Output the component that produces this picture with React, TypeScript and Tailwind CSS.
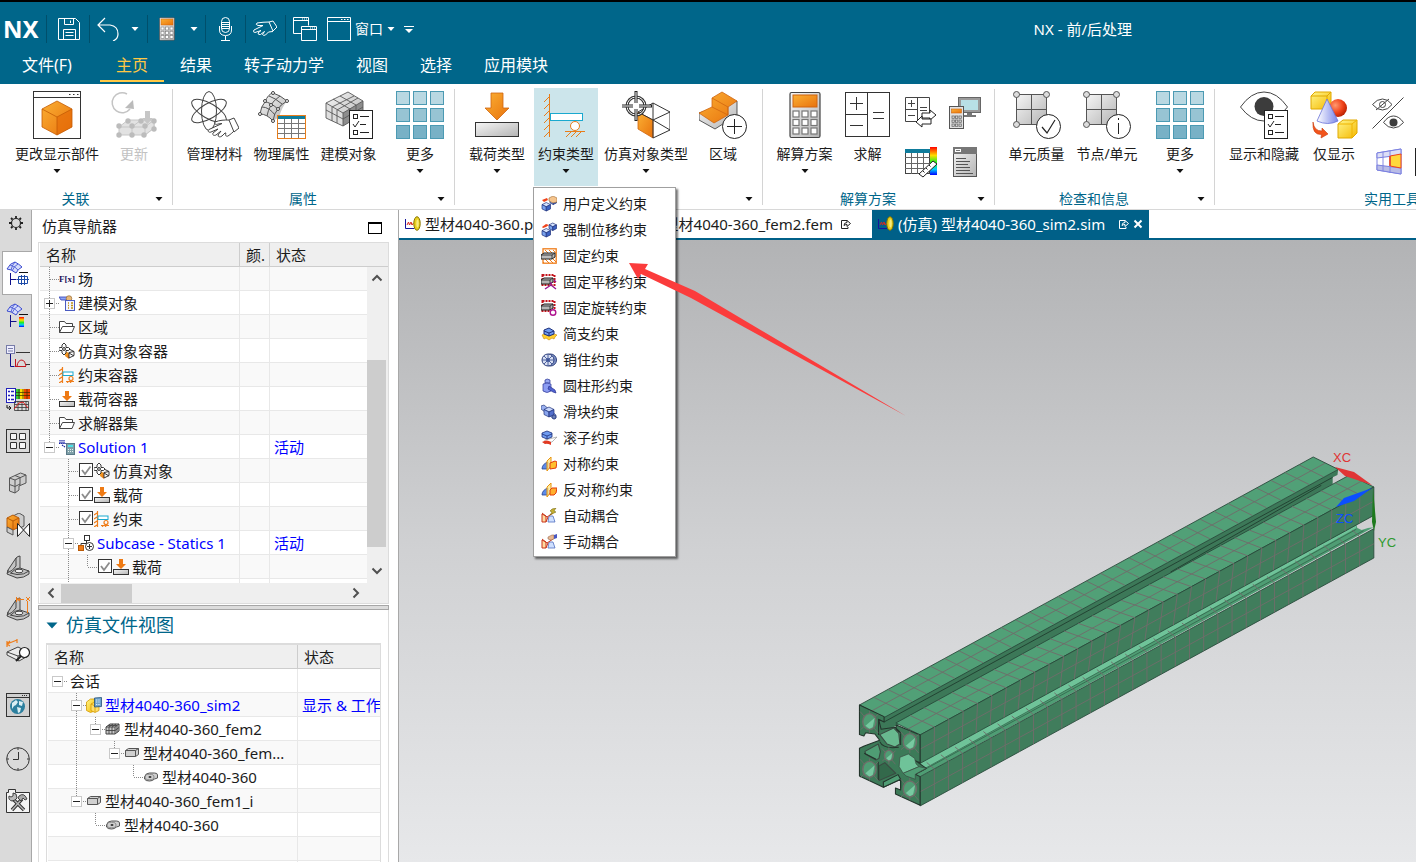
import React from "react";

type Kids = { children?: React.ReactNode };

/* ---------- drawing helpers ---------- */

function Svg({ s = 48, w, h, vb, children }: Kids & { s?: number; w?: number; h?: number; vb?: string }) {
  return (
    <svg width={w ?? s} height={h ?? s} viewBox={vb ?? `0 0 ${w ?? s} ${h ?? s}`} fill="none" className="block shrink-0" aria-hidden="true">
      {children}
    </svg>
  );
}

function Cube({ x, y, w, c = ["#d5e4ff", "#7aa3ee", "#3c63c4"], st = "#1d2f7a" }: { x: number; y: number; w: number; c?: string[]; st?: string }) {
  const q = w / 4;
  return (
    <g stroke={st} strokeWidth={w > 12 ? 1 : 0.7} strokeLinejoin="round">
      <path fill={c[0]} d={`M${x} ${y + q}L${x + 2 * q} ${y}L${x + w} ${y + q}L${x + 2 * q} ${y + 2 * q}Z`} />
      <path fill={c[1]} d={`M${x} ${y + q}L${x + 2 * q} ${y + 2 * q}V${y + w}L${x} ${y + 3 * q}Z`} />
      <path fill={c[2]} d={`M${x + w} ${y + q}L${x + 2 * q} ${y + 2 * q}V${y + w}L${x + w} ${y + 3 * q}Z`} />
    </g>
  );
}

function Defs() {
  return (
    <svg width="0" height="0" className="absolute" aria-hidden="true">
      <defs>
        <linearGradient id="gOrange" x1="0" y1="0" x2="1" y2="1">
          <stop offset="0" stopColor="#fbb034" />
          <stop offset="1" stopColor="#e8720c" />
        </linearGradient>
        <linearGradient id="gGrey" x1="0" y1="0" x2="1" y2="1">
          <stop offset="0" stopColor="#f6f6f6" />
          <stop offset="1" stopColor="#b4b4b4" />
        </linearGradient>
        <linearGradient id="gRain" x1="0" y1="0" x2="0" y2="1">
          <stop offset="0" stopColor="#f00" />
          <stop offset=".3" stopColor="#fd0" />
          <stop offset=".55" stopColor="#2e2" />
          <stop offset=".8" stopColor="#0cf" />
          <stop offset="1" stopColor="#00f" />
        </linearGradient>
        <linearGradient id="gYellow" x1="0" y1="0" x2="1" y2="1">
          <stop offset="0" stopColor="#fff68a" />
          <stop offset="1" stopColor="#f5b800" />
        </linearGradient>
        <linearGradient id="gBlue" x1="0" y1="0" x2="1" y2="0">
          <stop offset="0" stopColor="#fff" />
          <stop offset="1" stopColor="#7a86e8" />
        </linearGradient>
        <radialGradient id="gRed" cx=".35" cy=".35" r=".7">
          <stop offset="0" stopColor="#ff9a70" />
          <stop offset=".6" stopColor="#f0431a" />
          <stop offset="1" stopColor="#b82000" />
        </radialGradient>
      </defs>
    </svg>
  );
}

function Caret({ light = false }: { light?: boolean }) {
  return (
    <Svg w={8} h={4} vb="0 0 8 4">
      <path d="M.5 0h7L4 4z" fill={light ? "#fff" : "#111"} />
    </Svg>
  );
}

/* ---------- ribbon icons ---------- */

const IcChangePart = () => (
  <Svg>
    <rect x=".5" y=".5" width="47" height="47" stroke="#333" />
    <path d="M0 6.500h48" stroke="#333" />
    <path d="M36 3.500h1.500M40 3.500h1.500M44 3.500h1.500" stroke="#333" strokeWidth="1.200" />
    <path d="M24 10l15 8v18l-15 8-15-8V18z" fill="url(#gOrange)" />
    <path d="M24 26l15-8v18l-15 8z" fill="#e56c08" fillOpacity=".7" />
    <path d="M24 26v18M9 18l15 8 15-8M24 10l15 8v18l-15 8-15-8V18z" stroke="#c45c05" strokeWidth=".8" />
  </Svg>
);

const IcUpdate = () => (
  <Svg>
    <path d="M17 3A10 10 0 1 0 20 18" stroke="#c4c4c4" strokeWidth="1.500" />
    <path d="M15 17l8-8 1 9z" fill="#bbb" />
    <path d="M9 36l10-7h26v8l-9 7H9z" fill="#e2e2e2" />
    <path d="M9 36h26l9-7H18zM9 36v8h26v-8M22 36v8M35 44l9-7v-8M31 29l-9 7" stroke="#c6c6c6" />
    <path d="M35 20h5v7h3l-5.500 6-5.500-6h3z" fill="#c6c6c6" />
    <g fill="#bcbcbc">
      {[[9, 35], [22, 35], [35, 35], [9, 44], [22, 44], [34, 44], [18, 30], [31, 30], [44, 30], [44, 38]].map(([x, y], i) => (
        <circle key={i} cx={x} cy={y} r="2.700" />
      ))}
    </g>
  </Svg>
);

const IcAtom = () => (
  <Svg>
    <g stroke="#444" strokeWidth="1">
      <ellipse cx="18" cy="20" rx="7.500" ry="19.500" />
      <ellipse cx="18" cy="20" rx="7.500" ry="19.500" transform="rotate(60 18 20)" />
      <ellipse cx="18" cy="20" rx="7.500" ry="19.500" transform="rotate(-60 18 20)" />
      <path
        d="M38 29l5-2 5 10-5 4zM38 29c-5 0-9 0-14 2-1 2 1 3 3 2l4-.5-13 6c-2 1.500 0 3.500 2 2.500l7-3-5 4c-1 2 1 3 3 2l5-4-3 4c0 2 2 2.500 4 1l3-3 1 0c-1 2 0 4 2 3 3-2 5-4 6-5"
        fill="#fff"
        strokeLinejoin="round"
      />
    </g>
  </Svg>
);

const IcPhys = () => (
  <Svg>
    <path d="M7 11Q10 3 15 2Q22 4 29 10Q24 16 21 26L15 30Q10 23 2 23Q3 15 7 11Z" fill="url(#gGrey)" />
    <path d="M7 11Q10 3 15 2Q22 4 29 10Q22 14 20 18Q16 22 15 30Q9 23 2 23Q3 15 7 11ZM7 11Q12 11 20 18M4 16Q11 16 17 24M11 5Q17 7 24 13M22 5Q15 10 13 14Q10 19 9 25" stroke="#555" />
    <g fill="#fff" stroke="#444">
      {[[15, 2], [7, 10], [29, 10], [20, 18], [13, 14], [2, 23], [15, 30]].map(([x, y], i) => (
        <circle key={i} cx={x} cy={y} r="1.500" />
      ))}
    </g>
    <rect x="19.500" y="24.500" width="28" height="23" fill="#fff" />
    <rect x="20" y="25" width="27" height="3" fill="#0f7c9c" />
    <path d="M26.500 28v19M33.500 28v19M40.500 28v19M20 32.500h27M20 37.500h27M20 42.500h27" stroke="#777" />
    <rect x="19.500" y="24.500" width="28" height="23" stroke="#e87d1a" />
  </Svg>
);

const Checklist = ({ x, y }: { x: number; y: number }) => (
  <g transform={`translate(${x} ${y})`} stroke="#222">
    <rect x=".5" y=".5" width="23" height="28" fill="#fff" />
    <rect x="4.500" y="4.500" width="4" height="4" />
    <rect x="4.500" y="20.500" width="4" height="4" />
    <path d="M11 6.500h9M11 14.500h6M11 22.500h9M4 14l2 3 4-6" />
  </g>
);

const IcModel = () => (
  <Svg>
    <path d="M1 12L23 1l15 9v13L18 35 1 27z" fill="url(#gGrey)" />
    <path d="M1 12l17 10v13L1 27z" fill="#dedede" />
    <path d="M18 22l20-12v13L18 35z" fill="#8d8d8d" />
    <path d="M1 12L23 1l15 9L18 22zM1 12v15l17 8 20-12V10M18 22v13M1 19l17 9 20-12M8 8l17 10v13M15 5l16 9v13M7 16L29 5M12 19L33 7M7 16v14M12 19v13" stroke="#5a5a5a" strokeWidth=".9" />
    <Checklist x={24} y={19} />
  </Svg>
);

const IcMore = () => (
  <Svg>
    {[0, 1, 2].map((r) =>
      [0, 1, 2].map((c) => (
        <rect key={`${r}${c}`} x={c * 17 + 0.5} y={r * 17 + 0.5} width="13" height="13" fill={["#b9d8e2", "#97c4d3", "#78b1c6"][r]} stroke="#4c9ab3" />
      ))
    )}
  </Svg>
);

const IcLoad = () => (
  <Svg>
    <path d="M18 2h12v15h6L24 29 12 17h6z" fill="url(#gOrange)" stroke="#cf6510" strokeWidth=".8" />
    <rect x="2.500" y="31.500" width="43" height="14" fill="url(#gGrey)" stroke="#333" />
  </Svg>
);

const IcConstraint = () => (
  <Svg>
    <g stroke="#e87d1a">
      <path d="M7.500 3v43M7 6l-5 5M7 13l-5 5M7 20l-5 5M7 27l-5 5M7 34l-5 5M7 41l-5 5" />
      <circle cx="33" cy="35" r="4.500" fill="#fff" />
      <path d="M23 40.500h20M29 41l-5 5M34 41l-5 5M39 41l-5 5" />
    </g>
    <rect x="8.500" y="22.500" width="32" height="7" fill="#fff" stroke="#1aa9cf" />
  </Svg>
);

const IcSimObj = () => (
  <Svg>
    <path d="M16 21l15 8v18l-15-9z" fill="url(#gOrange)" stroke="#cf6510" strokeWidth=".8" />
    <path d="M16 21l15-9 17 9v18l-17 8M31 12v35M31 29l17-8M31 29l17 10M31 29L16 21" stroke="#333" />
    <circle cx="14" cy="15" r="9" stroke="#333" strokeWidth="3" />
    <circle cx="14" cy="15" r="9" stroke="#fff" strokeWidth="1" />
    <path d="M14 0v12M14 18v12M-1 15h12M17 15h13" stroke="#222" strokeWidth="3" />
    <path d="M14 1v11M14 18v11M0 15h11M17 15h12" stroke="#fff" strokeWidth="1" />
  </Svg>
);

const IcRegion = () => (
  <Svg>
    <path d="M0 22v7l16 9 22-14V10z" fill="url(#gGrey)" stroke="#333" strokeWidth=".8" />
    <path d="M13 7l10-6 15 9-9 6v8L15 32 0 22l13-6z" fill="url(#gOrange)" stroke="#cf6510" strokeWidth=".8" />
    <path d="M13 7l16 9v8l-16-8" stroke="#cf6510" strokeWidth=".8" />
    <circle cx="35.500" cy="35.500" r="12" fill="#fff" stroke="#222" />
    <path d="M35.500 28v15M28 35.500h15" stroke="#222" />
  </Svg>
);

const CalcShape = ({ w, h }: { w: number; h: number }) => (
  <Svg w={w} h={h} vb="0 0 32 48">
    <rect x="1" y="1.500" width="30" height="45" rx="1.500" fill="url(#gGrey)" stroke="#444" strokeWidth="1.200" />
    <rect x="4" y="4" width="24" height="12" fill="url(#gOrange)" stroke="#d0640e" />
    {[20, 28.500, 37].map((y) => [4, 13, 22].map((x) => <rect key={`${x}-${y}`} x={x} y={y} width="6" height="6" fill="#fff" stroke="#777" strokeWidth="1.200" />))}
  </Svg>
);

const IcSolve = () => (
  <Svg>
    <g stroke="#333">
      <rect x="1.500" y="1.500" width="44" height="44" fill="#fff" />
      <path d="M23.500 1.500v44M1.500 23.500h22M6 12.500h13M12.500 6v13M6 34.500h13M29 21.500h11M29 27.500h11" />
    </g>
  </Svg>
);

const IcCalcArrows = () => (
  <Svg s={32}>
    <path d="M.5.5h24v24H.500zM12.500.5v24M.5 12.500h12M3 6.500h7M6.500 3v7M3 18.500h7M15 10.500h7M15 13.500h7" fill="#fff" stroke="#444" />
    <path d="M17 16h8v-3l6 5-6 5v-2h-8z" fill="#fff" stroke="#222" />
    <path d="M26 22h-9v-3l-6 6 6 5v-3h9z" fill="#fff" stroke="#222" />
  </Svg>
);

const IcMonitor = () => (
  <Svg s={32}>
    <rect x="9.500" y=".5" width="22" height="15" fill="#9a9a9a" stroke="#666" />
    <path d="M12 3h17v10H12z" fill="#b8e0e6" />
    <path d="M18 16h5v2h4v2H15v-2h3z" fill="#777" />
    <rect x=".5" y="9.500" width="14" height="22" fill="#e2e2e2" stroke="#555" />
    <rect x="2.500" y="12" width="10" height="4" fill="url(#gOrange)" stroke="#d0640e" strokeWidth=".6" />
    {[19, 23, 27].map((y) => [3, 6.500, 10].map((x) => <rect key={`${x}-${y}`} x={x} y={y} width="2.300" height="2.300" stroke="#666" strokeWidth=".8" />))}
  </Svg>
);

const IcTableRuler = () => (
  <Svg s={32}>
    <rect x=".5" y="3.500" width="24" height="24" fill="#fff" stroke="#444" />
    <rect x="0" y="3" width="25" height="4" fill="#0f7c9c" />
    <path d="M6.500 7v21M12.500 7v21M18.500 7v21M0 11.500h25M0 17.500h25M0 22.500h25" stroke="#666" />
    <rect x="25" y="1" width="7" height="28" fill="url(#gRain)" />
    <path d="M14 28l14-13 4 3-14 13z" fill="#fff" stroke="#222" />
    <path d="M18 25l1.500 1.500M21 22l1.500 1.500M24 19l1.500 1.500" stroke="#222" />
  </Svg>
);

const IcDoc = () => (
  <Svg s={32}>
    <rect x="4.500" y="1.500" width="23" height="29" fill="url(#gGrey)" stroke="#555" />
    <rect x="4" y="1" width="24" height="7" fill="#777" />
    <rect x="6.500" y="3.500" width="5" height="2" stroke="#fff" />
    <path d="M7 12.500h10M7 15.500h14M7 18.500h12M7 21.500h14M7 24.500h14M7 27.500h17" stroke="#555" />
  </Svg>
);

const MeshSquare = () => (
  <>
    <rect x="3.500" y="3.500" width="30" height="30" fill="url(#gGrey)" />
    <path d="M3.500 3.500h30v30h-30zM18.500 3.500v30M3.500 18.500h30" stroke="#555" />
    <g fill="#ddd" stroke="#555">
      <circle cx="3.500" cy="3.500" r="3" />
      <circle cx="33.500" cy="3.500" r="3" />
      <circle cx="3.500" cy="33.500" r="3" />
    </g>
    <circle cx="35.500" cy="35.500" r="12" fill="#fff" stroke="#222" />
  </>
);

const IcQuality = () => (
  <Svg>
    <MeshSquare />
    <path d="M29 36l5 6 8-13" stroke="#222" strokeWidth="1.200" />
  </Svg>
);

const IcNode = () => (
  <Svg>
    <MeshSquare />
    <path d="M35.500 32v11M35.500 27v2" stroke="#222" />
  </Svg>
);

const IcEye = () => (
  <Svg>
    <path d="M.5 16Q11 1 24 1T47.500 16Q37 30 24 30T.5 16z" fill="#fff" stroke="#444" />
    <circle cx="24" cy="15.500" r="9.500" fill="#3c3c3c" />
    <Checklist x={24} y={19} />
  </Svg>
);

const IcOnly = () => (
  <Svg>
    <path d="M1 5l4-4h16v12l-4 5H1z" fill="url(#gYellow)" stroke="#e0a800" />
    <path d="M1 5h16v12M17 5l4-4" stroke="#e0a800" />
    <circle cx="28" cy="17" r="9" fill="url(#gRed)" />
    <path d="M17 8l11 22q-10 5-21 0z" fill="url(#gBlue)" stroke="#6a74d8" strokeWidth=".8" />
    <path d="M3 31q1 9 9 9l0-3 6 6-7 4 .5-3.500Q2 44 3 31z" fill="#f2541b" stroke="#c93a0c" strokeWidth=".6" />
    <path d="M28 33l5-4h14v13l-5 5H28z" fill="url(#gYellow)" stroke="#e0a800" />
    <path d="M28 33h14v14M42 33l5-4" stroke="#f0b400" />
  </Svg>
);

const IcEyes = () => (
  <Svg s={32}>
    <g stroke="#444">
      <path d="M31.500.5L.5 31.500" />
      <path d="M.5 7.500Q5 2 10.500 2T20 7.500Q16 13 10.500 13T.5 7.500z" />
      <circle cx="10.500" cy="7.500" r="3" />
      <path d="M4 13L17 2" />
      <path d="M11.500 25.500Q16 19 21.500 19T31.500 25.500Q27 31 21.500 31T11.500 25.500z" />
    </g>
    <circle cx="21.500" cy="25.500" r="4" fill="#3c3c3c" />
  </Svg>
);

const IcPlanes = () => (
  <Svg s={32}>
    <path d="M5 7l24-4v25L5 24z" fill="#fff" stroke="#7a80e0" />
    <path d="M5 19l24 3v6L5 24z" fill="#b9bce6" stroke="#7a80e0" />
    <path d="M5 7l24-4v6L5 12z" fill="#dcdef6" stroke="#7a80e0" />
    <path d="M18 10l11-2v14l-11-2z" fill="#ffd83b" stroke="#f0431a" />
    <path d="M18 5v22M11 6v19" stroke="#7a80e0" strokeWidth=".9" />
    <path d="M18 10v10" stroke="#f0431a" strokeWidth="1.500" />
  </Svg>
);

const IcEdge = () => (
  <Svg s={32}>
    <path d="M.5 2v28M0 4.500h20" stroke="#222" />
  </Svg>
);

/* ---------- small 16px icons ---------- */

const S16 = ({ children }: Kids) => <Svg s={16}>{children}</Svg>;

const menuIcons: React.ReactNode[] = [
  <S16 key="0"><Cube x={9} y={2} w={6.500} /><Cube x={1} y={6.500} w={8.500} /><path d="M8 2l4-2 4 2v4l-4 1-4-2z" fill="#f5c48c" stroke="#9a6a35" strokeWidth=".6" /><path d="M1 4l5-2 1 2-4 2z" fill="#f0431a" /></S16>,
  <S16 key="1"><Cube x={8} y={1} w={7.500} /><Cube x={1} y={6.500} w={8.500} /><path d="M1 5l4-3 3 1-3 2-3 1z" fill="#f0431a" /></S16>,
  <S16 key="2"><rect x="2" y=".8" width="13.200" height="14.400" fill="#fff" stroke="#ef7d1a" strokeWidth="1.300" /><path d="M4 2l3 3M8 2l3 3M12 2l3 3M3 15l-1-1M4 11l4 4M8 11l4 4M12 11l3 3" stroke="#ef7d1a" /><path d="M0 7l3-2h11v4l-3 2H0z" fill="#bbb" stroke="#222" /><path d="M0 7h11v4M11 7l3-2" stroke="#222" strokeWidth=".8" /></S16>,
  <S16 key="3"><path d="M1.500 1h12v10h-12z" fill="#fff" stroke="#c4141c" strokeDasharray="2 1" strokeWidth="2" /><path d="M0 6l3-2h9v4L9 10H0z" fill="#b5b5b5" stroke="#222" /><path d="M0 6h9v4M9 6l3-2" stroke="#222" strokeWidth=".8" /><path d="M4 15l6-4 5 4M10 8v4M13 6l2 2" stroke="#9a1590" strokeWidth="1.400" /></S16>,
  <S16 key="4"><path d="M1.500 1h12v10h-12z" fill="#fff" stroke="#c4141c" strokeDasharray="2 1" strokeWidth="2" /><path d="M0 6l3-2h9v4L9 10H0z" fill="#b5b5b5" stroke="#222" /><path d="M0 6h9v4M9 6l3-2" stroke="#222" strokeWidth=".8" /><circle cx="12" cy="12.500" r="2.800" fill="#fff" stroke="#b01590" strokeWidth="1.400" /></S16>,
  <S16 key="5"><path d="M1 9l2-1 5 2 5-2 3 1-2 2-1 2-2-1-3 2-3-2-2 1-1-2z" fill="#ffcf2e" stroke="#c98a00" strokeWidth=".6" /><path d="M3 4l5-2 5 3v3l-5 2-5-2z" fill="#6f9cf0" stroke="#1d2f7a" /><path d="M3 5l5 2 5-2M8 7v3" stroke="#1d2f7a" /></S16>,
  <S16 key="6"><circle cx="9.500" cy="8" r="6" fill="#7f93c8" stroke="#2d3f7c" /><circle cx="7" cy="8" r="6" fill="#d8dff2" stroke="#2d3f7c" /><circle cx="7" cy="8" r="2" fill="#4a62a8" /><path d="M7 2v12M1 8h12M3 4l8 8M11 4l-8 8" stroke="#3f5596" strokeWidth=".9" /></S16>,
  <S16 key="7"><path d="M4 2q2-2 5 0v3h-5z" fill="#98a8f0" stroke="#2a3494" strokeWidth=".7" /><path d="M2 6q4-2 8 0v7q-4 3-8 0z" fill="#8c9cf2" stroke="#2a3494" strokeWidth=".7" /><path d="M8 8l6 4 1 3-3-1-5-3z" fill="#4f62d0" stroke="#2a3494" strokeWidth=".7" /></S16>,
  <S16 key="8"><path d="M0 2l3-1 12 10v3l-2 1L0 5z" fill="#9ab0f0" stroke="#2d3f7c" strokeWidth=".7" /><Cube x={3} y={3} w={10} c={["#c7d6fb", "#8aa6ee", "#5470cc"]} /><circle cx="13" cy="13" r="2" fill="#6b7fb5" stroke="#1d2f7a" strokeWidth=".7" /></S16>,
  <S16 key="9"><path d="M4 10l12-3-5 5-8 1z" fill="#fff" stroke="#999" strokeWidth=".7" /><path d="M1 3l5-2 5 2v4l-5 2-5-2z" fill="#6f9cf0" stroke="#1d2f7a" strokeWidth=".8" /><path d="M1 4l5 2 5-2M6 6v3" stroke="#1d2f7a" strokeWidth=".8" /><path d="M1 12q5-3 9 0v3q-4-2-6-1z" fill="#e23a22" /></S16>,
  <S16 key="10"><path d="M1 13q0-5 6-7v7z" fill="#5c8bea" stroke="#24418f" strokeWidth=".8" /><path d="M6 5l4-4v9l-4 5z" fill="#ffe68a" fillOpacity=".8" stroke="#e8940c" /><path d="M9 7l5-2 2 1-1 6-6 1z" fill="#ffc02e" stroke="#e23a0c" /></S16>,
  <S16 key="11"><path d="M1 13q0-5 6-7v7z" fill="#5c8bea" stroke="#24418f" strokeWidth=".8" /><path d="M6 5l4-4v9l-4 5z" fill="#ffe68a" fillOpacity=".8" stroke="#e8940c" /><path d="M9 8l2-2 5 0-1 5-2 2H9z" fill="#ffb02e" stroke="#e23a0c" /></S16>,
  <S16 key="12"><path d="M1 6l4 2v6l-4 0z" fill="#ffd9a0" stroke="#c9341a" /><path d="M8 8h4l2 6H7z" fill="#cfe0ff" stroke="#5070c0" strokeWidth=".8" /><path d="M1 5l5 4 6-4M5 14l2-5" stroke="#c9341a" /><path d="M11 1l4-1-2 3 2 1-6 3 2-3-2-1z" fill="#c5b030" stroke="#6b5c08" strokeWidth=".5" /></S16>,
  <S16 key="13"><path d="M1 6l4 2v6l-4 0z" fill="#ffd9a0" stroke="#c9341a" /><path d="M8 8h4l2 6H7z" fill="#cfe0ff" stroke="#5070c0" strokeWidth=".8" /><path d="M1 5l5 4 6-4M5 14l2-5" stroke="#c9341a" /><path d="M7 3l4-2 2 0v4l-3 1-3-1z" fill="#e8b890" stroke="#9a6a50" strokeWidth=".6" /><path d="M13 1l3-1v4l-3 1z" fill="#4a58c0" /></S16>,
];

const TFolder = () => (
  <S16>
    <path d="M.5 13.500v-11h5l1.500 2h6.500v3M.5 13.500l3-6h12l-2.500 6z" stroke="#444" fill="#fff" />
  </S16>
);
const TFx = () => (
  <Svg s={16}>
    <text x="0" y="11" fontSize="9" fontWeight="700" fill="#1c1259" fontFamily="Liberation Serif, serif">F[x]</text>
  </Svg>
);
const TModel = () => (
  <S16>
    <path d="M0 2h8l2 3H2z" fill="#8fa5f5" stroke="#2b3bb0" strokeWidth=".8" />
    <circle cx="10" cy="3.500" r="2.800" fill="#e8b878" stroke="#8a5a20" strokeWidth=".6" />
    <rect x="6.500" y="5.500" width="9" height="10" fill="#f2f4ff" stroke="#4a5ac0" />
    <path d="M9 8h1M12 8h2M9 10.500h1M12 10.500h2M9 13h1M12 13h2" stroke="#c09010" strokeWidth="1.300" />
  </S16>
);
const TSim = () => (
  <S16>
    <path d="M6 8l4 2v6l-4-3z" fill="url(#gOrange)" />
    <path d="M10 6l5 2.500v4L10 15M10 15V9.500l5-1M10 10l5 3" stroke="#333" />
    <path d="M5 0L7 2v2.500h2.500l1.500 1.500-1.500 1.500H7V10L5 12 3 10V7.500H.5L-.5 6 .5 4.500H3V2z" fill="#fff" stroke="#222" strokeWidth=".9" />
    <circle cx="5" cy="6" r="1.400" stroke="#222" />
  </S16>
);
const TConstraint = () => (
  <S16>
    <path d="M3.500 0v16M3 2L0 4M3 6L0 8M3 10l-3 2M3 14l-3 2M7 14.500h8M9 15l-1 1.500M12 15l-1 1.500" stroke="#ef7d1a" strokeWidth="1.200" />
    <circle cx="12" cy="11.500" r="2" stroke="#ef7d1a" strokeWidth="1.200" />
    <rect x="4" y="5" width="10" height="3.500" fill="#fff" stroke="#1aa9cf" />
  </S16>
);
const TLoad = () => (
  <S16>
    <path d="M6 0h4v5h3L8 10 3 5h3z" fill="#ee7a14" />
    <rect x=".5" y="10.500" width="15" height="5" fill="url(#gGrey)" stroke="#333" />
  </S16>
);
const TSolution = () => (
  <S16>
    <path d="M1 1v3M3 1v3M5 1v3M0 4.500h7M3 6l3 2" stroke="#1420a0" strokeWidth="1.200" strokeDasharray="1.500 .6" />
    <rect x="7.500" y="4.500" width="8" height="11" fill="#7fa0a8" stroke="#5a7a88" />
    <rect x="9" y="6" width="5" height="2" fill="#4ce0e8" />
    <path d="M9 10.500h5M9 12.500h5" stroke="#e6f0f0" strokeDasharray="1 1" />
  </S16>
);
const TSubcase = () => (
  <S16>
    <rect x="6.500" y=".5" width="5" height="5" stroke="#333" fill="#fff" />
    <path d="M8.500 6v3M3 11V8.500h6" stroke="#333" />
    <rect x=".5" y="10.500" width="5" height="5" fill="#ef7d1a" stroke="#b85a08" />
    <circle cx="11.500" cy="11.500" r="4" fill="#fff" stroke="#333" />
    <path d="M11.500 9v5M9 11.500h5" stroke="#333" />
  </S16>
);
const TSim2 = () => (
  <S16>
    <path d="M.5 5l4-3h4v12l-4 1.500-4-2z" fill="url(#gYellow)" stroke="#d39a00" strokeWidth=".8" />
    <path d="M5 7l4-2 4 2v6.500l-4 2-4-2z" fill="#ffdf6b" stroke="#d39a00" strokeWidth=".8" />
    <path d="M5 7l4 2 4-2M9 9v6" stroke="#d39a00" strokeWidth=".8" />
    <path d="M8.500 1l7-.5v9l-7 .5z" fill="#6fa3cc" stroke="#24507a" strokeWidth=".8" />
    <path d="M10 3h4M10 5h4M10 7.500h4" stroke="#d8eeff" strokeDasharray="1 .7" />
  </S16>
);
const TMesh = () => (
  <S16>
    <path d="M1 6l4-3h9v7l-4 3H1z" fill="#c8c8c8" stroke="#444" />
    <path d="M1 6h9v7M10 6l4-3M4 6v7M7 6v7M1 9.500h9l4-3M4 6l4-3M7 6l4-3M12 4.500v7M3 4.500h9" stroke="#444" strokeWidth=".9" />
  </S16>
);
const TBlock = () => (
  <S16>
    <path d="M1.500 5.500l3-2h10v6l-3 2h-10z" fill="#d0d0d0" stroke="#555" />
    <path d="M1.500 5.500h10v6M11.500 5.500l3-2" stroke="#555" />
  </S16>
);
const TPart = () => (
  <S16>
    <path d="M1.500 8q1-4 5-4h5q3 0 3 2v3l-3 1q-2 2-5 2-4 0-5-2z" fill="#cfcfcf" stroke="#555" />
    <ellipse cx="6.500" cy="8" rx="4.500" ry="2.800" stroke="#777" strokeWidth=".8" />
    <ellipse cx="7" cy="8" rx="1.500" ry="1" fill="#333" />
  </S16>
);

/* ---------- tree pieces ---------- */

type Guide = "t" | "v" | "l" | "plus" | "minus" | "minusDown" | "minusRoot" | "none";

function GuideCell({ g }: { g: Guide }) {
  const dots = { stroke: "#8a8a8a", strokeDasharray: "1 1" };
  const box = g === "plus" || g.startsWith("minus");
  const art = (
    <Svg w={19} h={24}>
      {(g === "t" || g === "v" || g === "plus" || g === "minusDown") && <path d="M9.500 0v24" {...dots} />}
      {(g === "l" || g === "minus") && <path d="M9.500 0v12" {...dots} />}
      {g !== "v" && g !== "none" && <path d="M10 12.500h9" {...dots} />}
      {box && (
        <>
          <rect x="4.500" y="7.500" width="10" height="10" fill="#fff" stroke="#c9c9c9" />
          <path d="M6 12.500h7" stroke="#222" />
          {g === "plus" && <path d="M9.500 9v7" stroke="#222" />}
        </>
      )}
    </Svg>
  );
  return box ? (
    <button type="button" aria-label={g === "plus" ? "展开" : "折叠"} className="shrink-0">
      {art}
    </button>
  ) : (
    art
  );
}

function Check({ label }: { label: string }) {
  return (
    <span className="relative ml-px block size-[15px] shrink-0">
      <input type="checkbox" defaultChecked aria-label={label} className="block size-[14px] appearance-none border border-[#333] bg-white" />
      <svg viewBox="0 0 14 14" width="14" height="14" fill="none" className="pointer-events-none absolute top-0 left-0" aria-hidden="true">
        <path d="M3 7l3 4 5.500-7.500" stroke="#8c8c8c" strokeWidth="1.800" />
      </svg>
    </span>
  );
}

type Row = { guides: Guide[]; icon?: React.ReactNode; text: string; check?: boolean; blue?: boolean; status?: string };

function NameCell({ r }: { r: Row }) {
  return (
    <div className="flex h-[23px] items-center overflow-hidden whitespace-nowrap">
      {r.guides.map((g, i) => (
        <GuideCell key={i} g={g} />
      ))}
      {r.check && <Check label={r.text} />}
      {r.icon}
      <span className={r.blue ? "ml-[3px] truncate text-[#0000ff]" : "ml-[3px] truncate"}>{r.text}</span>
    </div>
  );
}

const simRows: Row[] = [
  { guides: ["t"], icon: <TFx />, text: "场" },
  { guides: ["plus"], icon: <TModel />, text: "建模对象" },
  { guides: ["t"], icon: <TFolder />, text: "区域" },
  { guides: ["t"], icon: <TSim />, text: "仿真对象容器" },
  { guides: ["t"], icon: <TConstraint />, text: "约束容器" },
  { guides: ["t"], icon: <TLoad />, text: "载荷容器" },
  { guides: ["t"], icon: <TFolder />, text: "求解器集" },
  { guides: ["minus"], icon: <TSolution />, text: "Solution 1", blue: true, status: "活动" },
  { guides: ["none", "t"], check: true, icon: <TSim />, text: "仿真对象" },
  { guides: ["none", "t"], check: true, icon: <TLoad />, text: "载荷" },
  { guides: ["none", "t"], check: true, icon: <TConstraint />, text: "约束" },
  { guides: ["none", "minusDown"], icon: <TSubcase />, text: "Subcase - Statics 1", blue: true, status: "活动" },
  { guides: ["none", "v", "l"], check: true, icon: <TLoad />, text: "载荷" },
  { guides: ["none", "v"], text: "" },
];

const fileRows: Row[] = [
  { guides: ["minusRoot"], text: "会话" },
  { guides: ["none", "minusDown"], icon: <TSim2 />, text: "型材4040-360_sim2", blue: true, status: "显示 & 工作" },
  { guides: ["none", "v", "minus"], icon: <TMesh />, text: "型材4040-360_fem2" },
  { guides: ["none", "v", "none", "minus"], icon: <TBlock />, text: "型材4040-360_fem..." },
  { guides: ["none", "v", "none", "none", "l"], icon: <TPart />, text: "型材4040-360" },
  { guides: ["none", "minus"], icon: <TBlock />, text: "型材4040-360_fem1_i" },
  { guides: ["none", "none", "l"], icon: <TPart />, text: "型材4040-360" },
  { guides: [], text: "" },
  { guides: [], text: "" },
];

/* ---------- header ---------- */

const Sep = () => <span className="h-7 w-px shrink-0 bg-[#004f6b]" />;

function TopBtn({ label, className, children }: Kids & { label: string; className: string }) {
  return (
    <button type="button" aria-label={label} className={"flex h-7 shrink-0 items-center justify-center " + className}>
      {children}
    </button>
  );
}

function Header() {
  const tabs = ["主页", "结果", "转子动力学", "视图", "选择", "应用模块"];
  return (
    <header className="h-[84px] shrink-0 border-t-2 border-black bg-[#00668a] text-white">
      <div className="flex h-12 items-center pt-[6px]">
        <span className="w-[46px] shrink-0 pl-[3px] text-2xl leading-7 font-bold">NX</span>
        <Sep />
        <TopBtn label="保存" className="w-[42px] pl-[2px]">
          <Svg s={24}>
            <path d="M1.500 1.500h17l4 4v17h-21zM7.500 1.500v6h9v-6M13.500 3.500v2.500M6.500 22.500v-10h12v10M8.500 15.500h8M8.500 18.500h8" stroke="#fff" />
          </Svg>
        </TopBtn>
        <Sep />
        <TopBtn label="撤销" className="w-8 pl-1">
          <Svg s={24}>
            <path d="M9 1L2 8l7 7M2 8h12q8 1 8 9 0 5-5 7" stroke="#fff" strokeWidth="1.200" />
          </Svg>
        </TopBtn>
        <TopBtn label="撤销列表" className="w-[25px]"><Caret light /></TopBtn>
        <Sep />
        <TopBtn label="计算器" className="w-9 pl-[2px]"><CalcShape w={16} h={24} /></TopBtn>
        <TopBtn label="计算器列表" className="w-[21px] pr-[2px]"><Caret light /></TopBtn>
        <Sep />
        <TopBtn label="语音" className="w-[39px] pr-[2px]">
          <Svg s={24}>
            <rect x="8.500" y=".5" width="8" height="15" rx="4" stroke="#fff" />
            <path d="M8.500 5.500h8M8.500 7.500h8M8.500 9.500h8M8.500 11.500h8M6.500 9v4q0 5.500 6 5.500t6-5.500V9M12.500 19v4M8 23.500h9" stroke="#fff" />
          </Svg>
        </TopBtn>
        <Sep />
        <TopBtn label="触控" className="w-[39px] pr-px">
          <Svg s={24}>
            <path d="M16 5l4-1 4 6-4 4zM16 5Q10 5 4 6q-2 1.500 1 2.500h5L1 13q-2 2 1 2.500l6-2-3 2.500q0 2 2.500 1.500l4-3-2 3q1 1.500 3 .5l3-3 4.500-.5" stroke="#fff" strokeLinejoin="round" />
          </Svg>
        </TopBtn>
        <Sep />
        <TopBtn label="层叠窗口" className="w-[38px]">
          <Svg s={24}>
            <path d="M8 16.500H.5V.5h15v8M.5 3.500h15M8.500 9.500h15v14h-15zM8.500 12.500h15" stroke="#fff" />
            <path d="M9 2h5M17 11h5" stroke="#fff" strokeDasharray="1 1" />
          </Svg>
        </TopBtn>
        <button type="button" className="flex h-7 shrink-0 items-center gap-1 pl-[3px] text-sm whitespace-nowrap">
          <Svg s={24}>
            <path d="M.5.5h23v23H.500zM.5 4.500h23" stroke="#fff" />
            <path d="M14 2.500h8" stroke="#fff" strokeDasharray="1.500 1.500" />
          </Svg>
          <span>窗口</span>
          <Caret light />
        </button>
        <TopBtn label="自定义工具条" className="ml-[6px] w-4">
          <Svg w={10} h={8}>
            <path d="M0 1.500h10" stroke="#fff" />
            <path d="M1 4h8L5 8z" fill="#fff" />
          </Svg>
        </TopBtn>
        <h1 className="mr-[284px] ml-auto text-[15px] leading-6 whitespace-nowrap">NX - 前/后处理</h1>
      </div>
      <nav className="flex text-base leading-[30px] whitespace-nowrap">
        <a href="#file" className="w-[100px] pl-[22px]">文件(F)</a>
        {tabs.map((t, i) => (
          <a key={t} href={"#tab" + i} className={i === 0 ? "border-b-2 border-[#ffc845] px-4 text-[#ffc845]" : "px-4"}>
            {t}
          </a>
        ))}
      </nav>
    </header>
  );
}

/* ---------- ribbon ---------- */

function Big({ icon, label, w, caret, dim, active }: { icon: React.ReactNode; label: string; w: string; caret?: boolean; dim?: boolean; active?: boolean }) {
  return (
    <button
      type="button"
      disabled={dim}
      className={"flex h-[98px] shrink-0 flex-col items-center pt-[3px] " + w + (dim ? " text-[#c2c2c2]" : "") + (active ? " bg-[#cce5eb]" : "")}
    >
      {icon}
      <span className="mt-[5px] text-sm leading-5 whitespace-nowrap">{label}</span>
      {caret && (
        <span className="mt-[5px]">
          <Caret />
        </span>
      )}
    </button>
  );
}

function SmallCol({ items, w }: { items: [string, React.ReactNode][]; w: string }) {
  return (
    <div className={"flex shrink-0 flex-col " + w}>
      {items.map(([label, ic]) => (
        <button key={label} type="button" aria-label={label} className="flex h-[49px] items-center justify-center">
          {ic}
        </button>
      ))}
    </div>
  );
}

function Group({ title, w, children }: Kids & { title: string; w: string }) {
  return (
    <section className={"relative flex shrink-0 flex-col after:absolute after:top-px after:right-0 after:bottom-1 after:w-px after:bg-[#d4d4d4] " + w}>
      <div className="flex h-[101px]">{children}</div>
      <div className="flex h-5 items-center pr-[10px] text-sm leading-5 text-[#00668a]">
        <h2 className="flex-1 pr-1 text-center">{title}</h2>
        <Caret />
      </div>
    </section>
  );
}

function ConstraintMenu() {
  const items = ["用户定义约束", "强制位移约束", "固定约束", "固定平移约束", "固定旋转约束", "简支约束", "销住约束", "圆柱形约束", "滑块约束", "滚子约束", "对称约束", "反对称约束", "自动耦合", "手动耦合"];
  return (
    <ul role="menu" className="absolute top-[99px] -left-px z-20 w-[143px] border border-[#a0a0a0] bg-white pt-[3px] pb-px shadow-[2px_2px_2px_rgba(0,0,0,0.55)]">
      {items.map((t, i) => (
        <li key={t} role="none">
          <button type="button" role="menuitem" className="flex h-[26px] w-full items-center gap-[6px] pl-[7px] text-sm whitespace-nowrap">
            {menuIcons[i]}
            {t}
          </button>
        </li>
      ))}
    </ul>
  );
}

function Ribbon() {
  return (
    <div className="relative z-10 flex h-[126px] shrink-0 border-b border-[#d8d8d8] bg-white pt-1">
      <Group title="关联" w="w-[173px]">
        <span className="w-[9px]" />
        <Big icon={<IcChangePart />} label="更改显示部件" w="w-24" caret />
        <Big icon={<IcUpdate />} label="更新" w="w-[58px]" dim />
      </Group>
      <Group title="属性" w="w-[282px]">
        <span className="w-2" />
        <Big icon={<IcAtom />} label="管理材料" w="w-[67px]" />
        <Big icon={<IcPhys />} label="物理属性" w="w-[67px]" />
        <Big icon={<IcModel />} label="建模对象" w="w-[67px]" />
        <span className="w-1" />
        <Big icon={<IcMore />} label="更多" w="w-17" caret />
      </Group>
      <Group title="" w="w-[308px]">
        <span className="w-[5px]" />
        <Big icon={<IcLoad />} label="载荷类型" w="w-[74px]" caret />
        <div className="relative">
          <Big icon={<IcConstraint />} label="约束类型" w="w-16" caret active />
          <ConstraintMenu />
        </div>
        <Big icon={<IcSimObj />} label="仿真对象类型" w="w-24" caret />
        <Big icon={<IcRegion />} label="区域" w="w-[58px]" />
      </Group>
      <Group title="解算方案" w="w-[232px]">
        <span className="w-2" />
        <Big icon={<CalcShape w={32} h={48} />} label="解算方案" w="w-[67px]" caret />
        <Big icon={<IcSolve />} label="求解" w="w-[59px]" />
        <span className="w-[2px]" />
        <SmallCol w="w-11" items={[["编辑求解器参数", <IcCalcArrows />], ["结果表", <IcTableRuler />]]} />
        <SmallCol w="w-11" items={[["解算监视器", <IcMonitor />], ["解算信息", <IcDoc />]]} />
      </Group>
      <Group title="检查和信息" w="w-[220px]">
        <span className="w-[7px]" />
        <Big icon={<IcQuality />} label="单元质量" w="w-[69px]" />
        <Big icon={<IcNode />} label="节点/单元" w="w-[72px]" />
        <span className="w-[3px]" />
        <Big icon={<IcMore />} label="更多" w="w-17" caret />
      </Group>
      <Group title="实用工具" w="w-[376px]">
        <span className="w-[7px]" />
        <Big icon={<IcEye />} label="显示和隐藏" w="w-[84px]" />
        <Big icon={<IcOnly />} label="仅显示" w="w-14" />
        <SmallCol w="w-[52px]" items={[["反转显示", <IcEyes />], ["截面", <IcPlanes />]]} />
        <span className="w-px" />
        <SmallCol w="w-8" items={[["视图", null], ["窗口", <IcEdge />]]} />
      </Group>
    </div>
  );
}

/* ---------- left rail ---------- */

const meshPatch = (
  <>
    <path d="M1 8q3-6 8-7 4 2 7 5-4 2-6 6-5-4-9-4z" fill="#d5dcfa" stroke="#3b4bd0" />
    <path d="M4 4q5 1 8 5M9 1q-3 3-4 8M12 3q-4 2-6 7" stroke="#3b4bd0" strokeWidth=".8" />
    <path d="M4.500 12v12M4.500 18.500h6" stroke="#10108a" />
    <path d="M13 11.500h9" stroke="#111" />
  </>
);
const partBody = (
  <>
    <path d="M2 15L10 3q2-2 4-2v12l9 3v3q-5 4-12 4l-10-4z" fill="#c4c4c4" stroke="#444" />
    <path d="M2 15v2M10 3v8q-3 5-9 7M14 13q-5 0-9 5M23 16q-5 4-12 3.500L4 18" stroke="#444" />
    <ellipse cx="13" cy="16" rx="4" ry="1.800" fill="#eee" stroke="#444" />
  </>
);

const railIcons: [string, React.ReactNode][] = [
  ["仿真导航器", <Svg s={24}>{meshPatch}<path d="M12.500 15.500h9v7h-9zM15.500 14v10M18.500 14v10M11 18.500h12" stroke="#1c4aa8" /></Svg>],
  ["后处理导航器", <Svg s={24}>{meshPatch}<rect x="13" y="14" width="5" height="10" fill="url(#gRain)" /></Svg>],
  ["XY 函数导航器", <Svg s={24}><rect x=".5" y=".5" width="8" height="8" fill="#eef" stroke="#777ca8" /><path d="M2 3.500h5M2 6h5" stroke="#777ca8" /><path d="M4.500 9v12.500h4" stroke="#10108a" /><path d="M10 7.500h14M19 19.500h5" stroke="#333" /><path d="M9.500 14v8M9 21.500h11M11 21q1-6 5-6 3 0 4 6" stroke="#c4141c" /></Svg>],
  ["结果视图", <Svg s={24}><path d="M9 2h15v10H9z" fill="#3c3" /><path d="M14 2h5v10h-5z" fill="#fd0" /><path d="M18 2h6v10h-6z" fill="#e40" /><path d="M9 5.500h15M9 8.500h15M13 2v10M17 2v10M21 2v10" stroke="#3a2a00" strokeWidth=".7" /><rect x=".5" y="1.500" width="9" height="14" fill="#fff" stroke="#22b" /><path d="M2 4.500h2M2 8.500h2M2 12.500h2M5 4.500h3M5 8.500h3M5 12.500h3" stroke="#22b" strokeWidth="1.500" /><path d="M8.500 14.500h14v9h-14zM8.500 17.500h14M8.500 20.500h14M12 14v10M16 14v10M20 14v10" stroke="#333" strokeWidth=".8" /><path d="M8 22l5-6 4-1 5 6" stroke="#d22" /><path d="M1 18v3h4M3 19l2 2-2 2" stroke="#111" /></Svg>],
  ["重用库", <Svg s={24}><rect x=".5" y=".5" width="23" height="23" stroke="#333" /><path d="M4.500 4.500h6v6h-6zM13.500 4.500h6v6h-6zM4.500 13.500h6v6h-6zM13.500 13.500h6v6h-6z" fill="#f4f4f4" stroke="#333" /></Svg>],
  ["装配导航器", <Svg s={24}><path d="M3.500 7l11-5 5.500 2v8l-7 3v4l-4 3-5.500-2z" fill="#cdcdcd" stroke="#555" /><path d="M3.500 7l5.500 2v13M9 9l11-5M14 6.500v8M3.500 13.500l5.500 2 5-2.500M9 4.500l5 2" stroke="#555" /></Svg>],
  ["约束导航器", <Svg s={24}><path d="M7 3l6-3 5 3v10l-6 3-5-3z" fill="#ccc" stroke="#555" /><path d="M1 5l6-3 6 3v9l-6 3-6-3z" fill="url(#gOrange)" stroke="#b85a08" /><path d="M1 14l6 3v5l-6-3z" fill="#ccc" stroke="#555" /><path d="M7 8v9M1 5l6 3 6-3" stroke="#b85a08" /><path d="M11.500 10.500v13l12-13v13z" fill="#fff" stroke="#222" /></Svg>],
  ["部件导航器", <Svg s={24}>{partBody}</Svg>],
  ["尺寸", <Svg s={24}>{partBody}<path d="M10.500 0v5M21.500 4v12M11 2.500h7M14 1l-3 1.500L14 4M20 0l4 4M24 0l-4 4" stroke="#ef7d1a" /></Svg>],
  ["查找", <Svg s={24}><path d="M1 13l11-5 10 5v4l-9 5-12-6z" fill="#ececec" stroke="#444" /><path d="M1 13l11 4 10-4M12 17v5" stroke="#444" /><path d="M1 8V2M1 5l10-4M11 0v4M4 2L1 5l3 2" stroke="#ef7d1a" strokeWidth="1.200" /><circle cx="18.500" cy="13.500" r="5" fill="#fff" stroke="#222" strokeWidth="1.200" /><path d="M15 17l-5 5" stroke="#222" strokeWidth="2" /></Svg>],
];

function Rail() {
  const cell = "flex h-[42px] w-full shrink-0 items-center justify-end pr-px";
  return (
    <nav aria-label="资源条" className="flex w-8 shrink-0 flex-col border-r border-[#a8a8a8] bg-[#dadada]">
      <button type="button" aria-label="设置" className="flex h-[42px] shrink-0 items-start justify-center pt-[6px]">
        <Svg s={14}>
          <circle cx="7" cy="7" r="4.500" stroke="#222" strokeWidth="1.200" />
          <path d="M7 0v2M7 12v2M0 7h2M12 7h2M2 2l1.500 1.500M10.500 10.500L12 12M12 2l-1.500 1.500M3.500 10.500L2 12" stroke="#222" strokeWidth="1.800" />
        </Svg>
      </button>
      {railIcons.map(([label, ic], i) =>
        i === 0 ? (
          <button key={label} type="button" aria-label={label} className="-my-px -mr-px ml-[2px] flex h-11 shrink-0 items-center justify-end border-y border-l border-[#a8a8a8] bg-white pr-[2px]">
            {ic}
          </button>
        ) : (
          <button key={label} type="button" aria-label={label} className={cell}>
            {ic}
          </button>
        )
      )}
      <button type="button" aria-label="浏览器" className={cell + " mt-3"}>
        <Svg s={24}>
          <rect x=".5" y=".5" width="23" height="23" fill="#d0d0d0" stroke="#333" />
          <path d="M0 4.500h24M16 2.500h1M18 2.500h1M20 2.500h1" stroke="#333" />
          <circle cx="11.500" cy="13.500" r="7.500" fill="#2c7f9e" />
          <path d="M6 10l4-3 2 2-2 3-2 1-2 3zM13 8l4 1-1 4-3-1zM11 14l4 1-1 4-2 1z" fill="#d9eef4" />
        </Svg>
      </button>
      <button type="button" aria-label="历史记录" className={cell + " mt-3"}>
        <Svg s={24}>
          <circle cx="12" cy="12" r="11.300" stroke="#333" />
          <path d="M12.500 5v7.500H7M12 1v2M12 21v2M1 12h2M21 12h2" stroke="#333" />
        </Svg>
      </button>
      <button type="button" aria-label="工具" className={cell}>
        <Svg s={24}>
          <path d="M.5 23.500V3.500h2V.5h7v3h14v20z" fill="#f4f4f4" stroke="#333" />
          <path d="M6 21L16 10M7 10l11 11" stroke="#333" strokeWidth="3.400" />
          <path d="M6 21L16 10M7 10l11 11" stroke="#b8b8b8" strokeWidth="1.400" />
          <path d="M13 7q5-4 8 3l-2 1-2-2-2 3-3-3z" fill="#aaa" stroke="#333" strokeWidth=".9" />
          <path d="M3 7q-1 4 3 5l3-1 2-2-1-4-3-1v3l-2 1z" fill="#bbb" stroke="#333" strokeWidth=".9" />
        </Svg>
      </button>
    </nav>
  );
}

/* ---------- navigator panel ---------- */

function Chevron({ d }: { d: string }) {
  return (
    <Svg s={12}>
      <path d={d} stroke="#505050" strokeWidth="2" />
    </Svg>
  );
}

const thCls = "h-6 border-b border-[#cdcdcd] bg-[#efefef] text-left font-normal";
const tdCls = "h-6 overflow-hidden border-b border-[#e8e8e8] p-0 whitespace-nowrap";

function Navigator() {
  return (
    <aside className="flex w-[366px] shrink-0 flex-col bg-white pr-[9px] pl-[6px] text-[15px] leading-[22px] text-[#1c1c1c]">
      <div className="flex h-8 shrink-0 items-center justify-between pr-[7px] pl-1">
        <h2>仿真导航器</h2>
        <button type="button" aria-label="最大化" className="mt-[3px] h-3 w-[14px] border border-t-2 border-black" />
      </div>

      <div className="flex shrink-0 flex-col border border-[#dcdcdc] pl-px">
        <div className="flex">
          <div className="h-[340px] min-w-0 flex-1 overflow-hidden">
            <table className="w-full table-fixed border-separate border-spacing-0">
              <colgroup>
                <col className="w-[200px]" />
                <col className="w-[30px]" />
                <col />
              </colgroup>
              <thead>
                <tr>
                  <th className={thCls + " border-r pl-[6px]"}>名称</th>
                  <th className={thCls + " overflow-hidden border-r pl-[6px] whitespace-nowrap"}>颜.</th>
                  <th className={thCls + " pl-[6px]"}>状态</th>
                </tr>
              </thead>
              <tbody>
                {simRows.map((r, i) => (
                  <tr key={i} className="odd:bg-[#f9f9f9]">
                    <td className={tdCls + " border-r"}>
                      <NameCell r={r} />
                    </td>
                    <td className={tdCls + " border-r"} />
                    <td className={tdCls}>
                      <span className="pl-1 text-[#0000ff]">{r.status}</span>
                    </td>
                  </tr>
                ))}
              </tbody>
            </table>
          </div>
          <div className="flex w-[21px] shrink-0 flex-col bg-[#efefef]">
            <span className="h-6 shrink-0 border-b border-[#cdcdcd]" />
            <button type="button" aria-label="向上滚动" className="flex h-[22px] items-center justify-center pr-[2px]">
              <Chevron d="M1.500 8.500L6 4l4.500 4.500" />
            </button>
            <span className="mt-[71px] mr-[2px] h-[187px] bg-[#cdcdcd]" />
            <button type="button" aria-label="向下滚动" className="mt-auto flex h-6 items-center justify-center pr-[2px]">
              <Chevron d="M1.500 3.500L6 8l4.500-4.500" />
            </button>
          </div>
        </div>
        <div className="flex h-5 items-center bg-[#efefef] pr-[26px]">
          <button type="button" aria-label="向左滚动" className="flex w-[21px] justify-center">
            <Chevron d="M8.500 1.500L4 6l4.500 4.500" />
          </button>
          <span className="h-[19px] w-[71px] bg-[#cdcdcd]" />
          <button type="button" aria-label="向右滚动" className="ml-auto">
            <Chevron d="M3.500 1.500L8 6l-4.500 4.500" />
          </button>
        </div>
      </div>

      <div className="mt-px h-[5px] shrink-0 border border-[#a6a6a6] bg-[#dcdcdc]" />

      <section className="flex min-h-0 flex-1 flex-col border-x border-[#dcdcdc] pr-[7px] pl-[7px]">
        <h2 className="flex h-[33px] shrink-0 items-center pb-[3px] text-lg leading-[30px] text-[#00668a]">
          <button type="button" className="flex items-center gap-2">
            <Svg w={12} h={7}>
              <path d="M.5.5h11L6 6.500z" fill="#00668a" />
            </Svg>
            仿真文件视图
          </button>
        </h2>
        <div className="min-h-0 flex-1 overflow-hidden border-x border-t-2 border-[#dcdcdc] pl-px">
          <table className="w-full table-fixed border-separate border-spacing-0">
            <colgroup>
              <col className="w-[250px]" />
              <col />
            </colgroup>
            <thead>
              <tr>
                <th className={thCls + " border-r pl-[6px]"}>名称</th>
                <th className={thCls + " pl-[6px]"}>状态</th>
              </tr>
            </thead>
            <tbody>
              {fileRows.map((r, i) => (
                <tr key={i} className="even:bg-[#f9f9f9]">
                  <td className={tdCls + " border-r"}>
                    <NameCell r={r} />
                  </td>
                  <td className={tdCls}>
                    <span className="pl-1 text-[#0000ff]">{r.status}</span>
                  </td>
                </tr>
              ))}
            </tbody>
          </table>
        </div>
      </section>
    </aside>
  );
}

/* ---------- graphics area ---------- */

function Beam() {
  const p = (u: number, v: number, t: number) => `${(53 + u * 4.125 + 1235 * t).toFixed(1)},${(795 + u * 2.25 + v * 5.325 - 744 * t).toFixed(1)}`;
  const quad = (a: string, b: string, c: string, d: string) => `M${a}L${b}L${c}L${d}Z`;
  const n = 32;
  let mesh = "";
  for (let i = 1; i < n; i++) {
    const t = i / n;
    const k = 0.0045 * Math.sin(Math.PI * t);
    mesh += `M${p(0, 0, t)}L${p(16, 0, t)}M${p(24, 0, t - k)}L${p(40, 0, t + k)}M${p(40, 0, t + k)}L${p(40, 16, t - k)}M${p(40, 23.500, t)}L${p(40, 40, t)}M${p(35, 22, t)}L${p(40, 23.500, t)}`;
  }
  mesh += `M${p(8, 0, 0)}L${p(8, 0, 1)}M${p(32, 0, 0)}L${p(32, 0, 1)}M${p(40, 8, 0)}L${p(40, 8, 1)}M${p(40, 32, 0)}L${p(40, 32, 1)}`;
  const holes = [[80, 845, 18, 24], [190, 905, 18, 24], [80, 988, 18, 24], [190, 1047, 18, 24], [133, 947, 12, 16]];
  return (
    <g transform="scale(.3674 .3333)" strokeLinejoin="round">
      <path d="M119,830L1356,88L1354,105L1341,112L1341,133L153,857L105,885L105,838Z" fill="#3c7858" />
      <path d="M120,846L1341,112M300,770L700,520M900,396L1310,136" stroke="#1f3d2e" strokeWidth="2.500" />
      <path d="M205,962L1405,253L1408,264L1420,270L1437,264L1452,262L218,1010L205,1003Z" fill="#4f9d74" />
      <path d="M205,968L1405,256L1405,264L235,985Z" fill="#6fc399" />
      <path d="M232,985L1405,268M218,996L1425,272" stroke="#2c5a43" strokeWidth="2" />
      <path d={quad(p(0, 0, 0), p(0, 0, 1), p(16.500, 0, 1), p(16.500, 0, 0))} fill="#51a077" stroke="#28493a" strokeWidth="2.500" />
      <path d={quad(p(24, 0, 0), p(24, 0, 1), p(40, 0, 1), p(40, 0, 0))} fill="#51a077" stroke="#28493a" strokeWidth="2.500" />
      <path d={quad(p(40, 0, 0), p(40, 0, 1), p(40, 16, 1), p(40, 16, 0))} fill="#407d5c" stroke="#28493a" strokeWidth="2.500" />
      <path d={quad(p(40, 23.500, 0), p(40, 23.500, 1), p(40, 40, 1), p(40, 40, 0))} fill="#407d5c" stroke="#28493a" strokeWidth="2.500" />
      <path d={mesh} stroke="#706c6b" strokeWidth="2.600" />

      <path d="M53,795L120,830L120,846L105,838L112,868L150,862L165,878L153,871L153,855L218,885L218,968L205,962L235,985L205,1003L218,1010L218,1096L151,1062L151,1044L165,1050L165,1018L118,1042L53,1008L53,925L66,918L108,901L95,882L70,878L65,888L53,884Z" fill="#3c7a58" stroke="#23352c" strokeWidth="3" />
      <path d="M108,884L146,864L160,880L163,912L150,921L128,912Z" fill="#68b98f" stroke="#3b4a42" strokeWidth="3" />
      <path d="M68,934L104,912L110,935L106,955L98,960L70,943Z" fill="#4f9d74" stroke="#3b4a42" strokeWidth="3" />
      <path d="M106,978L122,968L152,1000L106,1022Z" fill="#33694b" stroke="#3b4a42" strokeWidth="3" />
      <path d="M118,1026L158,1004L165,1018L118,1042Z" fill="#4f9d74" stroke="#23352c" strokeWidth="3" />
      <path d="M163,952L186,942L203,955L207,972L215,980L172,1000L161,980Z" fill="#6fc399" stroke="#3b4a42" strokeWidth="2" />
      <path d="M172,1000L215,980L235,985L205,1003L205,1018L180,1008Z" fill="#4f9d74" stroke="#3b4a42" strokeWidth="2" />
      <path d="M108,905Q118,928 160,922M66,940L98,958M105,838V885M165,880V915M104,965V1020M165,1018V1045" stroke="#23352c" strokeWidth="3" />
      {holes.map(([x, y, a, b], i) => (
        <g key={i}>
          <path d={`M${x - a - 7},${y - b - 6}L${x + a + 6},${y + b + 10}M${x + a + 6},${y - b + 2}L${x - a - 6},${y + b}M${x},${y - b - 9}V${y + b + 10}`} stroke="#6f6d6a" strokeWidth="2.500" />
          <ellipse cx={x} cy={y} rx={a} ry={b} fill="#4f9d74" stroke="#6f6d6a" strokeWidth="4" />
          <path d={`M${x - a * 0.6},${y + b * 0.5}L${x + a * 0.8},${y - b * 0.5}L${x + a * 0.5},${y + b * 0.7}L${x},${y + b * 0.9}Z`} fill="#78c9a1" />
        </g>
      ))}
    </g>
  );
}

const PinIcon = ({ c }: { c: string }) => (
  <Svg s={11}>
    <path d="M7 1.500H1.500v8H8V8" stroke={c} />
    <path d="M4 6.500q0-3 3-3V1.500L10.500 4.500 7 7.500v-2q-2 0-3 1z" stroke={c} />
  </Svg>
);

const DocIcon = () => (
  <S16>
    <path d="M.5 3v9.500h9" stroke="#14149a" />
    <path d="M2 9l1.500-3 1 3 1.500-3 1 3 1.500-2" stroke="#d8281e" />
    <ellipse cx="12" cy="7.500" rx="3.200" ry="6.800" fill="#e8cf20" stroke="#8a7600" />
    <ellipse cx="12.500" cy="7.500" rx="1.200" ry="4" fill="#f8ec80" />
  </S16>
);

function Viewport() {
  return (
    <main className="flex min-w-0 flex-1 flex-col border-l border-[#a8a8a8] bg-white">
      <div className="flex h-[30px] shrink-0 overflow-hidden border-b-2 border-[#006088] text-[15px] leading-[28px] whitespace-nowrap text-[#1c1c1c]">
        <a href="#prt" className="flex w-[231px] shrink-0 items-center gap-1 pl-[6px]">
          <DocIcon />
          型材4040-360.prt
        </a>
        <a href="#fem" className="flex w-[242px] shrink-0 items-center justify-end gap-[7px] pr-[21px]">
          <DocIcon />
          型材4040-360_fem2.fem
          <PinIcon c="#222" />
        </a>
        <div className="flex w-[277px] shrink-0 items-center gap-1 bg-[#006088] pl-[6px] text-white">
          <DocIcon />
          <a href="#sim">(仿真) 型材4040-360_sim2.sim</a>
          <span className="ml-auto">
            <PinIcon c="#fff" />
          </span>
          <button type="button" aria-label="关闭" className="mr-[6px]">
            <Svg s={10}>
              <path d="M1.500 1.500l7 7M8.500 1.500l-7 7" stroke="#fff" strokeWidth="2" />
            </Svg>
          </button>
        </div>
      </div>
      <div className="relative flex-1 overflow-hidden bg-linear-to-b from-[#b2b3b5] via-[#d0d1d3] to-[#e7e8ea]">
        <svg width="576" height="380" viewBox="0 0 576 380" fill="none" className="absolute top-[200px] left-[441px]" role="img" aria-label="型材网格模型">
          <Beam />
          <path d="M532 45L514 32 495 27 505 36z" fill="#e03535" />
          <path d="M532 48L514 61 496 67 504 58z" fill="#0b4fff" />
          <path d="M533 48l3 34-2 9-2-9z" fill="#1d7a1d" />
          <g fontFamily="Liberation Sans, sans-serif" fontSize="13">
            <text x="493" y="22" fill="#e03535">XC</text>
            <text x="496" y="83" fill="#0b4fff">ZC</text>
            <text x="538" y="107" fill="#2f9a2f">YC</text>
          </g>
        </svg>
      </div>
    </main>
  );
}

export default function App() {
  return (
    <div className="relative flex h-screen flex-col overflow-hidden bg-white font-['Noto_Sans','Noto_Sans_CJK_SC',sans-serif] text-[#1c1c1c]">
      <Defs />
      <Header />
      <Ribbon />
      <div className="flex min-h-0 flex-1">
        <Rail />
        <Navigator />
        <Viewport />
      </div>
      <svg width="280" height="156" viewBox="0 0 280 156" className="pointer-events-none absolute top-[261px] left-[628px] z-30" aria-hidden="true">
        <path d="M1 2l19 1-3 5L67 30 278 155 63 37 13 13 10 18z" fill="#fb3c3c" />
      </svg>
    </div>
  );
}
